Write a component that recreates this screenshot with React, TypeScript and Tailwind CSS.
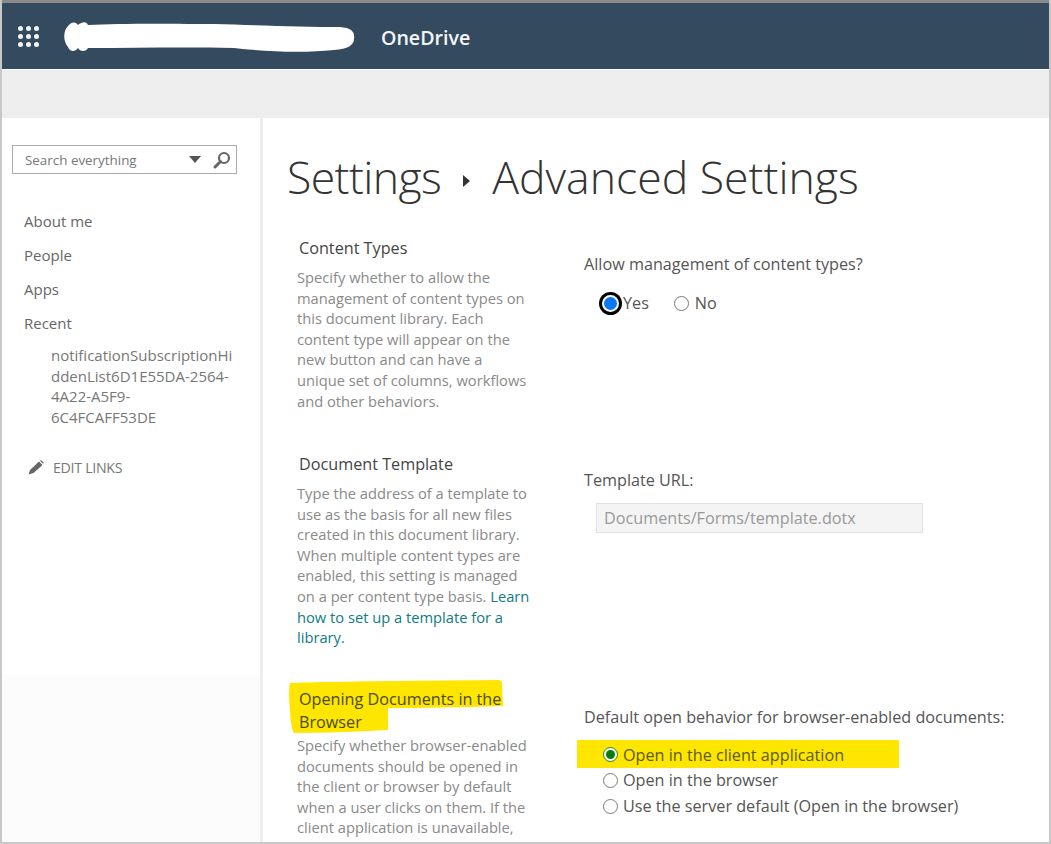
const font = "font-['Open_Sans','Noto_Sans',sans-serif]";

const navItems = ["About me", "People", "Apps", "Recent"];

const Radio = ({ checked }: { checked?: boolean }) => (
  <span
    className={`flex h-[15px] w-[15px] shrink-0 items-center justify-center rounded-full border bg-white ${
      checked ? "border-[#1c8a1c]" : "border-[#7a7a7a]"
    }`}
  >
    {checked && <span className="h-[9px] w-[9px] rounded-full bg-[#0a7a0a]" />}
  </span>
);

const AppGrid = () => (
  <div className="grid w-[21px] grid-cols-3 gap-[3px]">
    {Array.from({ length: 9 }).map((_, i) => (
      <span key={i} className="h-[5px] w-[5px] rounded-full bg-[#f4f6f8]" />
    ))}
  </div>
);

const SectionText = ({ title, children, className }: { title: React.ReactNode; children: React.ReactNode; className?: string }) => (
  <div className={className}>
    <h2 className="pl-[2px] text-[16.2px] leading-[23px] text-[#444]">{title}</h2>
    <p className="mt-[7px] text-[14.7px] leading-[20.6px] text-[#8a8a8a]">{children}</p>
  </div>
);

export default function App() {
  return (
    <div className={`${font} h-[844px] w-[1051px] overflow-hidden border-x-2 border-b-2 border-[#c8c8c8] bg-white`}>
      {/* top bar */}
      <div className="h-[3px] bg-[#8a8a8a]" />
      <header className="flex h-[66px] items-center bg-[#344a5f] pl-[16px]">
        <AppGrid />
        <svg width="292" height="34" viewBox="0 0 292 34" className="ml-[25px] mt-[4px]">
          <path
            d="M4 5 C8 0 12 1 14 4 C18 1 22 0 24 4 C60 2 120 3 150 3 C190 4 240 6 276 6 C288 7 291 11 290 18 C290 24 284 28 270 29 C240 32 205 31 170 27 C120 26 70 27 24 27 C22 31 16 31 14 27 C11 31 6 31 4 26 C-1 20 -1 10 4 5 Z"
            fill="#fff"
          />
        </svg>
        <span className="ml-[25px] mt-[4px] text-[19.6px] font-semibold text-[#f4f7fa]">OneDrive</span>
      </header>
      <div className="mt-px h-[48px] bg-[#eeeeee]" />

      <div className="flex">
        {/* left nav */}
        <aside className="h-[726px] w-[261px] shrink-0 border-r-[3px] border-[#eeeeee] bg-[linear-gradient(#fff_557px,#fcfcfc_557px)] pl-[10px] pt-[27px]">
          <div className="flex h-[29px] w-[225px] items-center border border-[#ababab] pl-[12px] pr-[5px] text-[13.4px] text-[#777]">
            <span className="flex-1 pt-px">Search everything</span>
            <svg width="14" height="8" viewBox="0 0 14 8" className="mr-[11px]">
              <path d="M1 0 H13 L7 7 Z" fill="#555" />
            </svg>
            <svg width="18" height="18" viewBox="0 0 18 18" fill="none">
              <circle cx="11" cy="7" r="5" stroke="#666" strokeWidth="2.2" />
              <path d="M7.5 10.5 L2 16" stroke="#666" strokeWidth="3" strokeLinecap="round" />
            </svg>
          </div>
          <nav className="mt-[36px] w-[225px] pl-[12px] text-[15px] text-[#666]">
            {navItems.map((item) => (
              <div key={item} className="h-[34px] leading-[22px]">
                {item}
              </div>
            ))}
            <div className="mt-[-1px] break-all pl-[27px] text-[15px] leading-[20.7px] text-[#777]">
              notificationSubscriptionHiddenList6D1E55DA-2564-
              <br />
              4A22-A5F9-
              <br />
              6C4FCAFF53DE
            </div>
            <div className="mt-[29px] flex items-center gap-[9px] pl-[4px] text-[14.2px] text-[#777]">
              <svg width="16" height="15" viewBox="0 0 16 15">
                <path d="M0.5 14.5 L2 10 L11 1.5 L14.5 5 L5.5 13 Z M12 0.8 L13 0 L15.8 2.8 L15 3.8 Z" fill="#666" />
              </svg>
              <span className="tracking-[-0.3px]">EDIT LINKS</span>
            </div>
          </nav>
        </aside>

        {/* main */}
        <main className="flex-1 pl-[25px]">
          <h1 className="-ml-px mt-[26px] flex h-[66px] items-center text-[44.6px] font-light leading-[66px] text-[#333]">
            <span className="tracking-[-0.6px]">Settings</span>
            <svg width="7" height="12" viewBox="0 0 7 12" className="mx-[22px] mt-[8px]">
              <path d="M0 0 L7 6 L0 12 Z" fill="#333" />
            </svg>
            Advanced Settings
          </h1>

          <div className="grid grid-cols-[296px_1fr]">
            {/* content types */}
            <SectionText title="Content Types" className="mt-[27px] h-[216px] pl-[9px] pr-[55px]">
              Specify whether to allow the management of content types on this document library. Each content type will appear on the new button and can have a unique set of columns, workflows and other behaviors.
            </SectionText>
            <div className="pt-[42px] text-[16.2px] text-[#555]">
              <div className="leading-[24px]">Allow management of content types?</div>
              <div className="mt-[15px] flex items-center pl-[15px] leading-[24px]">
                <span className="flex h-[23px] w-[23px] items-center justify-center rounded-full bg-black">
                  <span className="flex h-[17px] w-[17px] items-center justify-center rounded-full bg-white">
                    <span className="h-[13px] w-[13px] rounded-full bg-[#0a78f5]" />
                  </span>
                </span>
                <span className="ml-px">Yes</span>
                <span className="ml-[25px]">
                  <Radio />
                </span>
                <span className="ml-[6px]">No</span>
              </div>
            </div>

            {/* document template */}
            <SectionText title="Document Template" className="h-[235px] pl-[9px] pr-[50px]">
              Type the address of a template to use as the basis for all new files created in this document library. When multiple content types are enabled, this setting is managed on a per content type basis.{" "}
              <span className="text-[#0f7b83]">Learn how to set up a template for a library.</span>
            </SectionText>
            <div className="pt-[15px] text-[16.2px] text-[#555]">
              <div className="leading-[24px]">Template URL:</div>
              <div className="ml-[12px] mt-[11px] flex h-[30px] w-[327px] items-center border border-[#e1e1e1] bg-[#f4f4f4] pl-[7px] text-[#999]">
                Documents/Forms/template.dotx
              </div>
            </div>

            {/* opening documents */}
            <div className="relative pl-[9px] pr-[55px]">
              <svg width="216" height="54" viewBox="0 0 216 54" className="absolute left-0 top-[-8px]">
                <path d="M2 3 Q60 1 210 0 Q214 0 214 4 L215 26 Q150 28 100 28 L100 50 Q50 53 6 53 Q3 50 2 30 Q0 10 2 3 Z" fill="#ffe600" />
              </svg>
              <h2 className="relative pl-[2px] text-[16.2px] leading-[23px] text-[#4a4a10]">
                Opening Documents in the Browser
              </h2>
              <p className="mt-px text-[14.7px] leading-[20.6px] text-[#8a8a8a]">
                Specify whether browser-enabled documents should be opened in the client or browser by default when a user clicks on them. If the client application is unavailable,
              </p>
            </div>
            <div className="pt-[17px] text-[16.2px] text-[#555]">
              <div className="leading-[24px]">Default open behavior for browser-enabled documents:</div>
              <div className="relative mt-[13px] flex h-[26px] items-center pl-[19px] text-[#5c5a10]">
                <span className="absolute left-[-7px] top-[-2px] h-[28px] w-[322px] bg-[#ffe600]" />
                <span className="relative flex items-center gap-[5px]">
                  <Radio checked />
                  Open in the client application
                </span>
              </div>
              <div className="flex h-[25px] items-center gap-[5px] pl-[19px]">
                <Radio />
                Open in the browser
              </div>
              <div className="flex h-[26px] items-center gap-[5px] pl-[19px]">
                <Radio />
                Use the server default (Open in the browser)
              </div>
            </div>
          </div>
        </main>
      </div>
    </div>
  );
}
